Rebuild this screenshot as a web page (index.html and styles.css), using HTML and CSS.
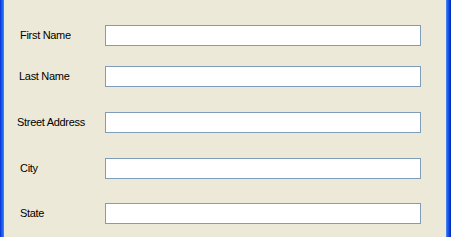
FILE: index.html
```html
<!DOCTYPE html>
<html lang="en">
<head>
    <meta charset="UTF-8">
    <title>Address Form</title>
    <link rel="stylesheet" href="styles.css">
</head>
<body>
    <div class="window">
        <div class="edgeLeft"></div>
        <form class="panel">
            <div class="row">
                <label class="lbl">First Name</label>
                <input class="box" type="text">
            </div>
            <div class="row row20">
                <label class="lbl lblLast">Last Name</label>
                <input class="box" type="text">
            </div>
            <div class="row row25">
                <label class="lbl lblStreet">Street Address</label>
                <input class="box" type="text">
            </div>
            <div class="row row25">
                <label class="lbl">City</label>
                <input class="box" type="text">
            </div>
            <div class="row row24">
                <label class="lbl">State</label>
                <input class="box" type="text">
            </div>
        </form>
        <div class="edgeRight"></div>
    </div>
</body>
</html>
```

FILE: styles.css
```css
*{
    padding: 0px;
    margin: 0px;
    box-sizing: border-box;
}
body{
    width: 451px;
    height: 237px;
    overflow: hidden;
    background-color: #ece9d8;
    font-family: "Liberation Sans", Arial, sans-serif;
    font-size: 11px;
    letter-spacing: -0.3px;
    color: #000;
}
.window{
    display: flex;
    height: 237px;
}
.edgeLeft{
    width: 4px;
    background: linear-gradient(to right, #0a2ac8, #1553e8, #1a66f2, #4f8cf5);
}
.edgeRight{
    width: 5px;
    background: linear-gradient(to right, #5d93f2, #1b68f0, #1252e6, #0a37d4, #0626b8);
}
.panel{
    flex: 1;
    padding-top: 25px;
}
.row{
    display: flex;
    align-items: center;
    height: 21px;
}
.row20{
    margin-top: 20px;
}
.row24{
    margin-top: 24px;
}
.row25{
    margin-top: 25px;
}
.lbl{
    width: 101px;
    padding-left: 16px;
    padding-bottom: 2px;
    white-space: nowrap;
}
.lblLast{
    padding-left: 15px;
}
.lblStreet{
    padding-left: 13px;
}
.box{
    width: 316px;
    height: 21px;
    border: 1px solid #7f9db9;
    background-color: #fff;
    outline: none;
}
```
